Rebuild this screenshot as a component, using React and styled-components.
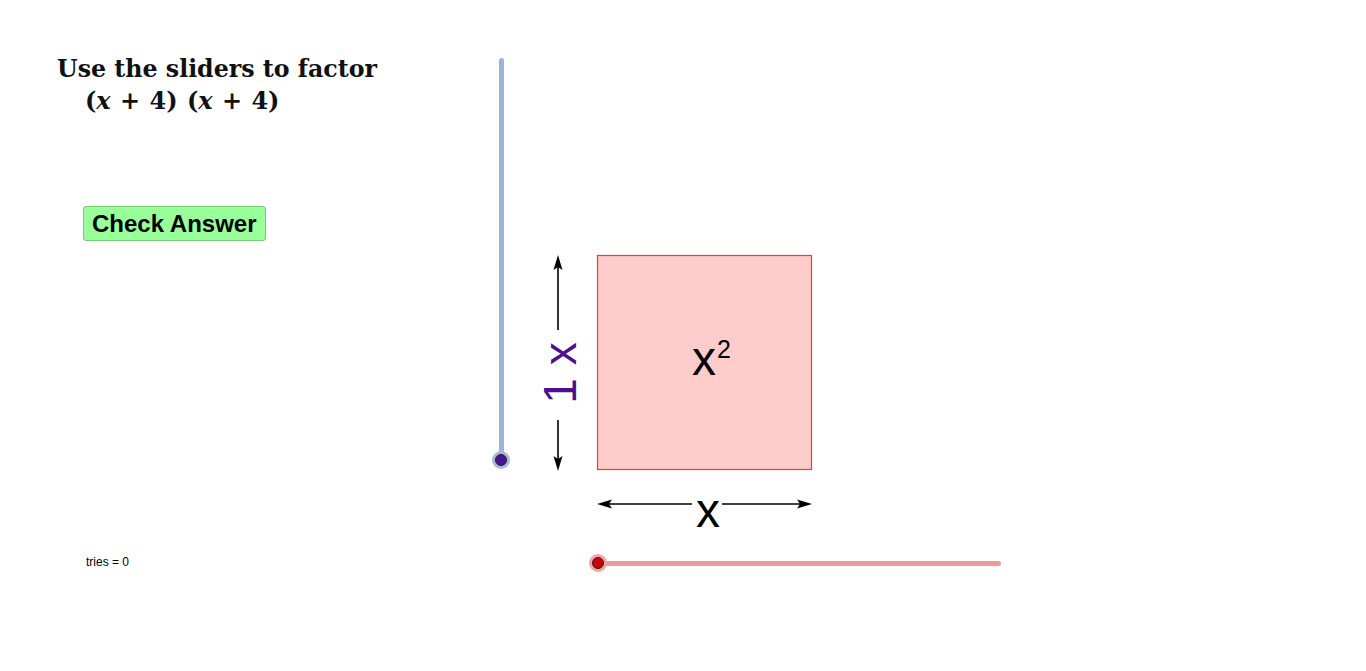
import React from "react";
import styled, { createGlobalStyle } from "styled-components";

const GlobalStyle = createGlobalStyle`
  html, body {
    margin: 0;
    padding: 0;
    background: #ffffff;
  }
  body {
    font-family: "Liberation Sans", Arial, sans-serif;
  }
`;

const Page = styled.div`
  width: 1366px;
  height: 671px;
  display: flex;
  overflow: hidden;
  background: #ffffff;
`;

const InfoPanel = styled.div`
  width: 480px;
  flex: none;
  display: flex;
  flex-direction: column;
  align-items: flex-start;
  padding: 53px 0 0 57px;
  box-sizing: border-box;
`;

const Title = styled.div`
  font-family: "DejaVu Serif", "Liberation Serif", serif;
  font-weight: bold;
  font-size: 23.7px;
  line-height: 32px;
  color: #111;
`;

const MathLine = styled.div`
  font-family: "DejaVu Serif", "Liberation Serif", serif;
  font-weight: bold;
  font-size: 24px;
  line-height: 32px;
  color: #111;
  margin-left: 28px;
  word-spacing: 1px;
  i {
    font-style: italic;
  }
`;

const CheckButton = styled.button`
  margin: 89px 0 0 26px;
  height: 35px;
  padding: 0 8px;
  background: #99ff99;
  border: 1.5px solid #77cc77;
  border-radius: 3px;
  font-family: "Liberation Sans", Arial, sans-serif;
  font-weight: bold;
  font-size: 24px;
  color: #000;
  cursor: pointer;
`;

const Tries = styled.div`
  margin: 314px 0 0 29px;
  font-family: "Liberation Sans", Arial, sans-serif;
  font-size: 12px;
  color: #000;
`;

const Stage = styled.div`
  position: relative;
  flex: 1;
  height: 671px;
`;

const Drawing = styled.svg`
  position: absolute;
  left: 0;
  top: 0;
`;

const Track = styled.div`
  position: absolute;
  left: ${(p) => p.x}px;
  top: ${(p) => p.y}px;
  width: ${(p) => (p.vertical ? 5 : p.length)}px;
  height: ${(p) => (p.vertical ? p.length : 5)}px;
  border-radius: 3px;
  background: ${(p) => p.color};
`;

const Knob = styled.div`
  position: absolute;
  left: ${(p) => p.x - 9}px;
  top: ${(p) => p.y - 9}px;
  width: 18px;
  height: 18px;
  border-radius: 50%;
  background: ${(p) => p.halo};
  display: flex;
  align-items: center;
  justify-content: center;
  &::after {
    content: "";
    width: 10px;
    height: 10px;
    border-radius: 50%;
    background: ${(p) => p.color};
    border: 1px solid #222;
  }
`;

const OX = 480;

const Arrow = ({ x1, y1, x2, y2 }) => {
  const dx = x2 - x1;
  const dy = y2 - y1;
  const len = Math.hypot(dx, dy);
  const ux = dx / len;
  const uy = dy / len;
  const hl = 15;
  const hw = 4.5;
  const bx = x2 - ux * hl;
  const by = y2 - uy * hl;
  const pts = `${x2},${y2} ${bx - uy * hw},${by + ux * hw} ${bx + ux * 3},${by + uy * 3} ${bx + uy * hw},${by - ux * hw}`;
  return (
    <g>
      <line x1={x1} y1={y1} x2={bx + ux * 4} y2={by + uy * 4} stroke="#000" strokeWidth="1.6" />
      <polygon points={pts} fill="#000" />
    </g>
  );
};

export default function App() {
  return (
    <>
      <GlobalStyle />
      <Page>
        <InfoPanel>
          <Title>Use the sliders to factor</Title>
          <MathLine>
            (<i>x</i> + 4) (<i>x</i> + 4)
          </MathLine>
          <CheckButton>Check Answer</CheckButton>
          <Tries>tries = 0</Tries>
        </InfoPanel>
        <Stage>
          <Drawing width="886" height="671" viewBox={`${OX} 0 886 671`}>
            <rect x="597.5" y="255.5" width="214" height="214" fill="#ffcccc" stroke="#ff3333" strokeWidth="1.2" />
            <text x="692" y="375" fontFamily="Liberation Sans, Arial, sans-serif" fontSize="48" fill="#000">
              x
              <tspan dx="1" dy="-17" fontSize="25">2</tspan>
            </text>
            <Arrow x1={558} y1={330} x2={558} y2={255} />
            <Arrow x1={558} y1={420} x2={558} y2={471} />
            <text
              x="0"
              y="0"
              transform="translate(576 373) rotate(-90)"
              textAnchor="middle"
              fontFamily="Liberation Sans, Arial, sans-serif"
              fontSize="46"
              fill="#4b0f8f"
            >
              1 x
            </text>
            <Arrow x1={692} y1={504} x2={597} y2={504} />
            <Arrow x1={722} y1={504} x2={812} y2={504} />
            <text x="708" y="527" textAnchor="middle" fontFamily="Liberation Sans, Arial, sans-serif" fontSize="48" fill="#000">
              x
            </text>
          </Drawing>
          <Track vertical x={501 - OX - 2.5} y={58} length={403} color="#a1b1d9" />
          <Knob x={501 - OX} y={460} color="#4b1590" halo="#a8b8dd" />
          <Track x={598 - OX} y={560.5} length={403} color="#ee9a9a" />
          <Knob x={598 - OX} y={563} color="#cc0000" halo="#f4a3a3" />
        </Stage>
      </Page>
    </>
  );
}
